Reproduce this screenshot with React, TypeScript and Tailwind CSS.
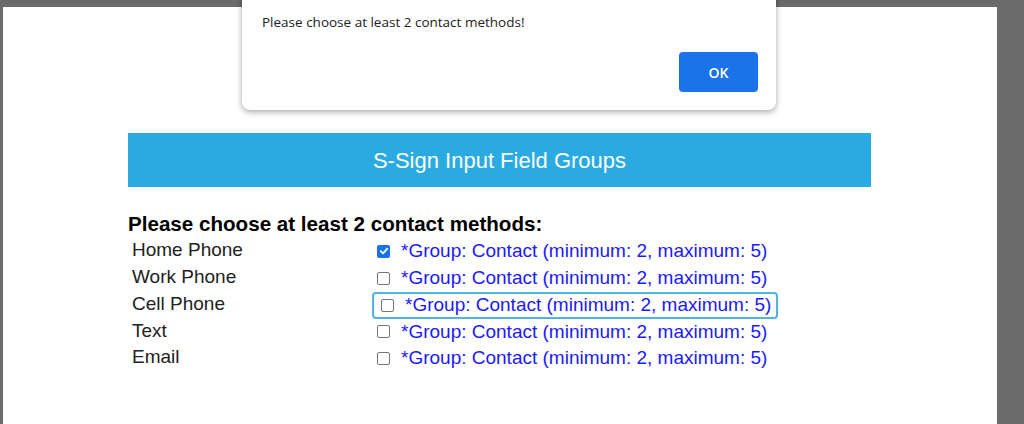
import React from "react";

const METHODS = ["Home Phone", "Work Phone", "Cell Phone", "Text", "Email"];

function Box({ checked }: { checked: boolean }) {
  if (checked) {
    return (
      <span className="flex h-[13px] w-[13px] items-center justify-center rounded-[2px] bg-[#1a73e8]">
        <svg width="10" height="10" viewBox="0 0 10 10" fill="none">
          <path d="M1.8 5.2 L4 7.3 L8.3 2.6" stroke="white" strokeWidth="1.8" strokeLinecap="round" strokeLinejoin="round" />
        </svg>
      </span>
    );
  }
  return <span className="block h-[13px] w-[13px] rounded-[2px] border border-[#767676] bg-white" />;
}

export default function App() {
  return (
    <div className="relative h-[424px] w-[1024px] overflow-hidden bg-[#6b6b6b]">
      <div className="ml-[3px] mt-[7px] h-[417px] w-[994px] bg-white pt-[126px] pl-[125px] font-['Liberation_Sans',Arial,sans-serif]">
        <div className="flex h-[54px] w-[743px] items-center justify-center bg-[#29abe2] text-[22px] text-white">
          S-Sign Input Field Groups
        </div>
        <div className="mt-[25px] text-[20.6px] font-bold leading-[24px] text-black">
          Please choose at least 2 contact methods:
        </div>
        <div className="mt-[1px] flex flex-col">
          {METHODS.map((m, i) => {
            const focused = i === 2;
            return (
              <div key={m} className="flex h-[26.75px] items-center">
                <span className="w-[249px] pl-[4px] text-[19px] leading-[22px] text-[#222]">{m}</span>
                {focused ? (
                  <div className="-ml-[5px] mt-[3px] flex h-[27px] w-[406px] items-center rounded-[4px] border-2 border-[#4fb3e6] pl-[7px]">
                    <Box checked={false} />
                    <span className="ml-[11px] text-[19px] leading-[22px] text-[#1a1aff]">
                      *Group: Contact (minimum: 2, maximum: 5)
                    </span>
                  </div>
                ) : (
                  <div className="flex items-center pt-[2px]">
                    <Box checked={i === 0} />
                    <span className="ml-[11px] text-[19px] leading-[22px] text-[#1a1aff]">
                      *Group: Contact (minimum: 2, maximum: 5)
                    </span>
                  </div>
                )}
              </div>
            );
          })}
        </div>
      </div>

      <div className="absolute left-[242px] top-[-20px] flex h-[130px] w-[534px] flex-col rounded-[8px] bg-white px-[20px] pt-[33px] shadow-[0_2px_6px_rgba(0,0,0,0.35)] font-['Open_Sans','Noto_Sans',sans-serif]">
        <div className="text-[13.5px] leading-[18px] text-[#202124]">Please choose at least 2 contact methods!</div>
        <div className="mt-[21px] flex justify-end">
          <button className="mr-[-2px] h-[40px] w-[79px] rounded-[4px] bg-[#1a73e8] text-[14px] font-semibold text-white">
            OK
          </button>
        </div>
      </div>
    </div>
  );
}
